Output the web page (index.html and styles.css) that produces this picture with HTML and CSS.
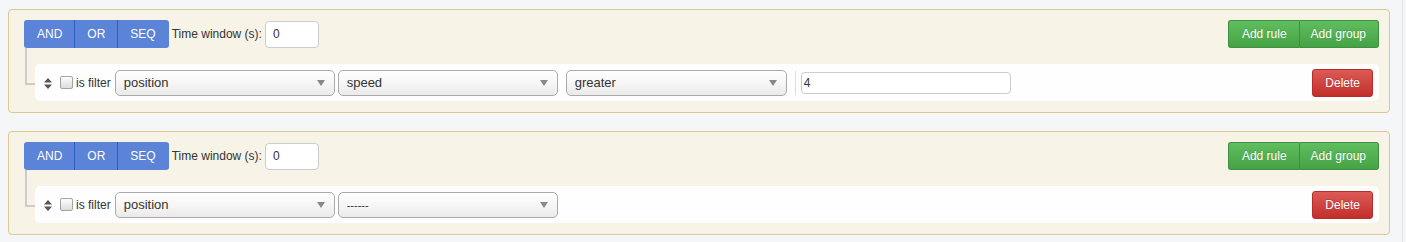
FILE: index.html
```html
<!DOCTYPE html>
<html>
<head>
<meta charset="utf-8">
<link rel="stylesheet" href="styles.css">
</head>
<body>
<div class="page">
  <div class="group">
    <div class="group-header">
      <div class="conds">
        <button class="cond">AND</button><button class="cond">OR</button><button class="cond">SEQ</button>
      </div>
      <span class="tw-label">Time window (s):</span>
      <input class="tw-input" type="text" value="0">
      <div class="actions">
        <button class="btn-green">Add rule</button><button class="btn-green">Add group</button>
      </div>
    </div>
    <div class="rules">
      <div class="rule">
        <svg class="handle" width="8" height="11" viewBox="0 0 8 11"><path d="M4 0 L8 4.5 L0 4.5 Z M0 6.5 L8 6.5 L4 11 Z" fill="#555"/></svg>
        <span class="chk"></span>
        <span class="chk-label">is filter</span>
        <div class="sel"><span>position</span><i class="arrow"></i></div>
        <div class="sel sel-2"><span>speed</span><i class="arrow"></i></div>
        <div class="sel sel-3"><span>greater</span><i class="arrow"></i></div>
        <span class="sep"></span>
        <input class="val" type="text" value="4">
        <button class="btn-red">Delete</button>
      </div>
    </div>
  </div>

  <div class="group">
    <div class="group-header">
      <div class="conds">
        <button class="cond">AND</button><button class="cond">OR</button><button class="cond">SEQ</button>
      </div>
      <span class="tw-label">Time window (s):</span>
      <input class="tw-input" type="text" value="0">
      <div class="actions">
        <button class="btn-green">Add rule</button><button class="btn-green">Add group</button>
      </div>
    </div>
    <div class="rules">
      <div class="rule">
        <svg class="handle" width="8" height="11" viewBox="0 0 8 11"><path d="M4 0 L8 4.5 L0 4.5 Z M0 6.5 L8 6.5 L4 11 Z" fill="#555"/></svg>
        <span class="chk"></span>
        <span class="chk-label">is filter</span>
        <div class="sel"><span>position</span><i class="arrow"></i></div>
        <div class="sel sel-2"><span class="dash">------</span><i class="arrow"></i></div>
        <button class="btn-red">Delete</button>
      </div>
    </div>
  </div>
</div>
</body>
</html>
```

FILE: styles.css
```css
html, body {
  margin: 0;
  padding: 0;
  background: #f5f6f8;
}
body {
  font-family: "Liberation Sans", Arial, Helvetica, sans-serif;
  font-size: 12px;
  color: #333;
}
.page {
  width: 1403px;
  min-height: 242px;
  box-sizing: border-box;
  padding: 9px 12px 0 8px;
  border-right: 1px solid #e4e5e7;
}
.group {
  border: 1px solid #dcc896;
  background: #f7f3e6;
  border-radius: 4px;
  padding: 10px 10px 11px 15px;
  margin-bottom: 18px;
}
.group-header {
  display: flex;
  align-items: center;
  height: 28px;
}
.conds {
  display: flex;
  height: 28px;
  border-radius: 3px;
  overflow: hidden;
}
.cond {
  font-family: inherit;
  font-size: 12px;
  color: #fff;
  background: #5b83d7;
  border: 0;
  padding: 0 12px 0 12px;
  height: 28px;
  margin: 0;
}
.cond:first-child {
  padding-left: 13px;
}
.cond + .cond {
  border-left: 1px solid #2e5fc6;
}
.cond:last-child {
  padding-right: 13px;
}
.tw-label {
  margin-left: 3px;
  font-size: 12px;
  color: #333;
}
.tw-input {
  margin-left: 3px;
  width: 54px;
  height: 27px;
  box-sizing: border-box;
  border: 1px solid #ccc;
  border-radius: 4px;
  padding: 0 7px;
  font-family: inherit;
  font-size: 12px;
  color: #333;
  background: #fff;
}
.actions {
  margin-left: auto;
  display: flex;
  height: 28px;
}
.btn-green {
  font-family: inherit;
  font-size: 12px;
  color: #fff;
  height: 28px;
  margin: 0;
  padding: 0 12px 0 11px;
  background: linear-gradient(#60bd60, #45a345);
  border: 1px solid #3e8f3e;
  text-shadow: 0 -1px 0 rgba(0,0,0,.15);
}
.btn-green:first-child {
  border-radius: 3px 0 0 3px;
  border-right: 0;
  padding: 0 12px 0 13px;
}
.btn-green:last-child {
  border-radius: 0 3px 3px 0;
  border-left: 1px solid #3d8f3d;
}
.rules {
  margin: 16px 0 0 11px;
}
.rule {
  position: relative;
  display: flex;
  align-items: center;
  height: 37px;
  box-sizing: border-box;
  background: #fefefe;
  border-radius: 5px;
  padding: 0 6px 0 9px;
}
.rule::before {
  content: "";
  position: absolute;
  left: -10px;
  top: -16px;
  width: 8px;
  height: 35px;
  border-left: 2px solid #ccc;
  border-bottom: 2px solid #ccc;
}
.handle {
  display: block;
  margin-top: 1px;
}
.chk {
  margin-left: 8px;
  width: 11px;
  height: 11px;
  border: 1px solid #a3a3a3;
  border-radius: 2px;
  background: linear-gradient(#fdfdfd, #dcdcdc);
}
.chk-label {
  margin-left: 3px;
  font-size: 12px;
}
.sel {
  margin-left: 4px;
  position: relative;
  width: 220px;
  height: 26px;
  box-sizing: border-box;
  border: 1px solid #aaa;
  border-radius: 5px;
  background: linear-gradient(#ffffff 0%, #f6f6f6 50%, #eaeaea 100%);
  display: flex;
  align-items: center;
  padding-left: 8px;
  font-size: 13px;
  color: #333;
}
.sel-2 {
  margin-left: 3px;
}
.sel-3 {
  margin-left: 8px;
  width: 221px;
}
.dash {
  font-size: 11px;
  letter-spacing: 0;
}
.arrow {
  position: absolute;
  right: 9px;
  top: 9px;
  width: 0;
  height: 0;
  border-left: 4px solid transparent;
  border-right: 4px solid transparent;
  border-top: 6px solid #888;
}
.sep {
  margin-left: 8px;
  width: 1px;
  height: 24px;
  background: #ddd;
}
.val {
  margin-left: 5px;
  width: 210px;
  height: 22px;
  box-sizing: border-box;
  border: 1px solid #ccc;
  border-radius: 4px;
  padding: 0 2px;
  font-family: inherit;
  font-size: 12px;
  color: #333;
  background: #fff;
}
.btn-red {
  margin-left: auto;
  font-family: inherit;
  font-size: 12px;
  color: #fff;
  height: 28px;
  padding: 0 12px;
  background: linear-gradient(#dc5a56, #c22f2b);
  border: 1px solid #b92c28;
  border-radius: 3px;
  text-shadow: 0 -1px 0 rgba(0,0,0,.15);
}
```
